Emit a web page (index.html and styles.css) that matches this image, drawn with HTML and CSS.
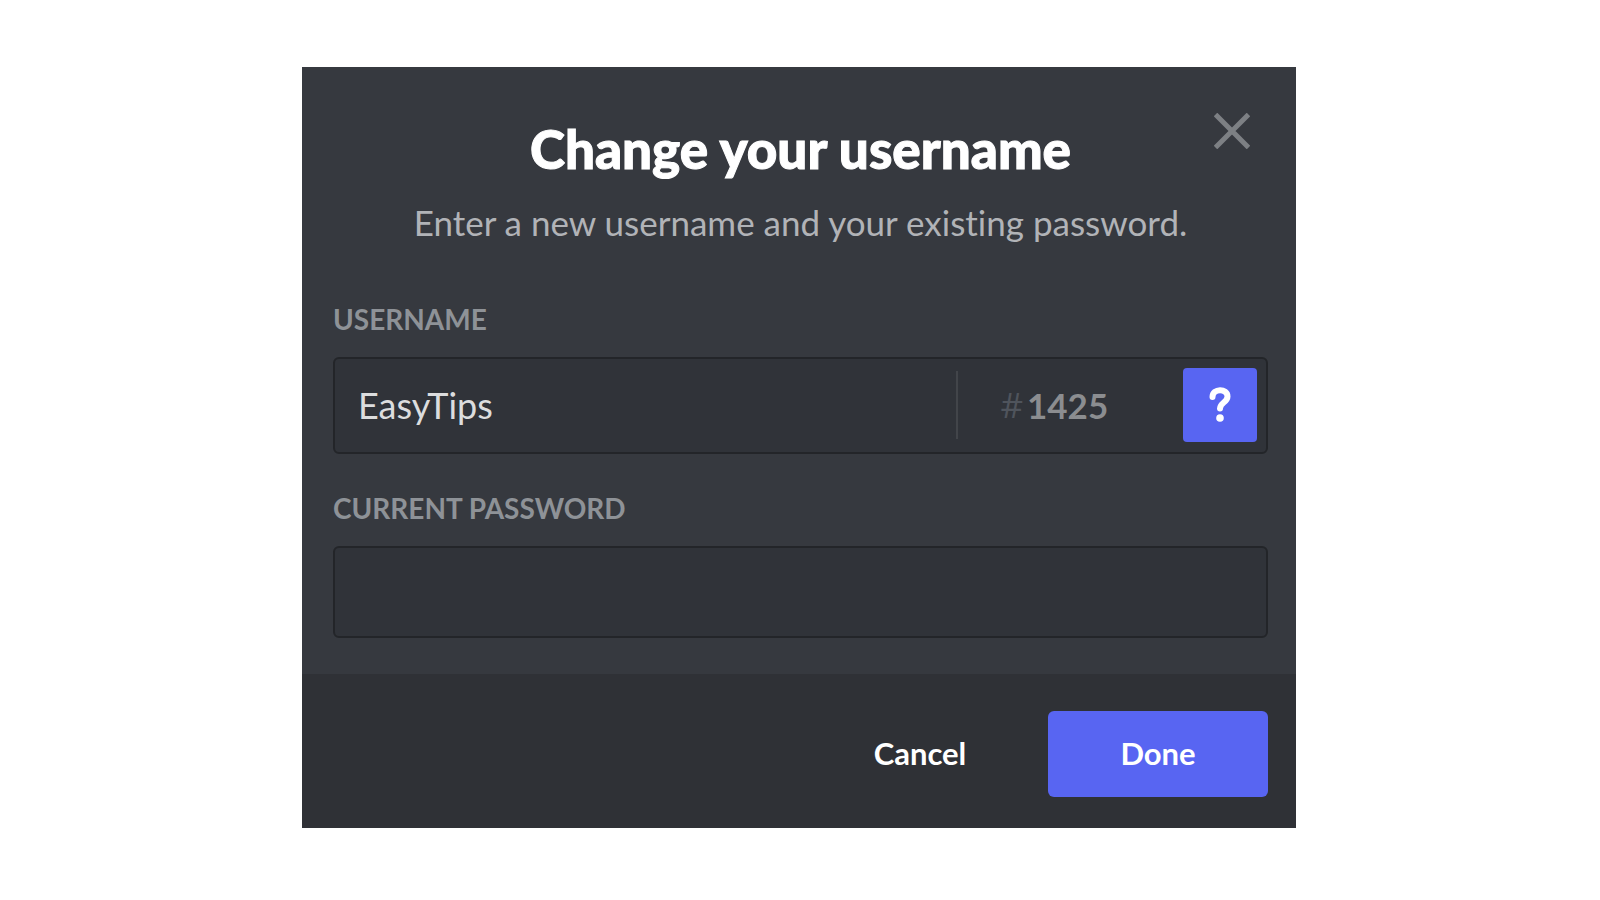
FILE: index.html
```
<!DOCTYPE html>
<html lang="en">
<head>
    <meta charset="UTF-8">
    <meta name="viewport" content="width=device-width, initial-scale=1.0">
    <title>Change your username</title>
    <link rel="stylesheet" href="styles.css">
</head>
<body>
    <form class="modal" role="dialog" aria-labelledby="modalTitle">
        <button type="button" class="close-btn" aria-label="Close">
            <svg viewBox="0 0 36 36" width="36" height="36" fill="none" stroke="currentColor" stroke-width="5">
                <path d="M1.500 1.500L34.500 34.500M34.500 1.500L1.500 34.500"/>
            </svg>
        </button>

        <div class="modal-header">
            <h1 id="modalTitle">Change your username</h1>
            <p>Enter a new username and your existing password.</p>
        </div>

        <div class="modal-body">
            <label class="field-label" for="username">Username</label>
            <div class="username-box">
                <input type="text" id="username" class="username-input" value="EasyTips">
                <div class="tag">
                    <span class="tag-hash">#</span>
                    <input type="text" class="tag-input" value="1425" maxlength="4" aria-label="Tag number">
                </div>
                <button type="button" class="help-btn" aria-label="Help">
                    <svg viewBox="0 0 24 36" width="24" height="36">
                        <path d="M4.500 11C4.500 2 19.500 2 19.500 10.500C19.500 16.500 12 16.500 12 22.500" fill="none" stroke="currentColor" stroke-width="6" stroke-linecap="round"/>
                        <circle cx="12" cy="32" r="3.800" fill="currentColor"/>
                    </svg>
                </button>
            </div>

            <label class="field-label" for="password">Current password</label>
            <input type="password" id="password" class="password-input">
        </div>

        <div class="modal-footer">
            <button type="button" class="btn btn-cancel">Cancel</button>
            <button type="submit" class="btn btn-done">Done</button>
        </div>
    </form>
</body>
</html>
```
FILE: styles.css
```
:root {
    --modal-bg: #36393f;
    --footer-bg: #2f3136;
    --input-bg: #303339;
    --input-border: #232529;
    --label-color: #8e9297;
    --muted-color: #b1b3b7;
    --accent: #5865f2;
}

* {
    box-sizing: border-box;
}

body {
    margin: 0;
    padding: 67px 22px 67px 20px;
    background-color: #fff;
    font-family: Lato, 'Open Sans', sans-serif;
    font-variant-ligatures: none;
}

input, button {
    font-family: inherit;
    margin: 0;
    padding: 0;
    border: none;
    background: none;
}

.modal {
    position: relative;
    max-width: 994px;
    margin: 0 auto;
    background-color: var(--modal-bg);
}

/* Header */
.close-btn {
    position: absolute;
    top: 46px;
    right: 46px;
    width: 36px;
    height: 36px;
    color: #7d8084;
    cursor: pointer;
}

.close-btn svg {
    display: block;
}

.modal-header {
    padding: 50px 28px 0 31px;
    text-align: center;
}

h1 {
    margin: 0;
    color: #fff;
    font-size: 53px;
    font-weight: 900;
    line-height: 64px;
    -webkit-text-stroke: 1px #fff; /* heavier title */
}

.modal-header p {
    margin: 17px 0 0;
    color: var(--muted-color);
    font-size: 35px;
    line-height: 48px;
}

/* Fields */
.modal-body {
    padding: 56px 28px 36px 31px;
}

.field-label {
    display: block;
    margin-bottom: 21px;
    color: var(--label-color);
    font-size: 28px;
    font-weight: 700;
    line-height: 34px;
    text-transform: uppercase;
}

.username-box,
.password-input {
    width: 100%;
    border: 2px solid var(--input-border);
    border-radius: 6px;
    background-color: var(--input-bg);
}

.username-box {
    display: flex;
    align-items: center;
    height: 97px;
    margin-bottom: 37px;
    padding: 0 9px 2px 0;
}

.username-input {
    flex: 1;
    min-width: 0;
    height: 68px;
    padding-left: 23px;
    color: #dcddde;
    font-size: 36px;
}

.tag {
    display: flex;
    align-items: center;
    gap: 4px;
    height: 68px;
    padding-left: 42px;
    border-left: 2px solid #42454a;
}

.tag-hash {
    color: #4f545c;
    font-family: 'Open Sans', sans-serif;
    font-size: 35px;
}

.tag-input {
    width: 156px;
    color: #8b8d90;
    font-size: 35px;
    font-weight: 700;
}

.help-btn {
    display: flex;
    align-items: center;
    justify-content: center;
    width: 74px;
    height: 74px;
    padding-bottom: 2px;
    border-radius: 4px;
    background-color: var(--accent);
    color: #fff;
    cursor: pointer;
}

.password-input {
    display: block;
    height: 92px;
    padding: 0 23px;
    color: #dcddde;
    font-size: 36px;
}

/* Footer */
.modal-footer {
    display: flex;
    justify-content: flex-end;
    gap: 20px;
    padding: 37px 28px 31px;
    background-color: var(--footer-bg);
}

.btn {
    height: 86px;
    padding-bottom: 2px;
    border-radius: 6px;
    color: #fff;
    font-size: 31px;
    font-weight: 700;
    cursor: pointer;
}

.btn-cancel {
    width: 216px;
}

.btn-done {
    width: 220px;
    background-color: var(--accent);
}
```
